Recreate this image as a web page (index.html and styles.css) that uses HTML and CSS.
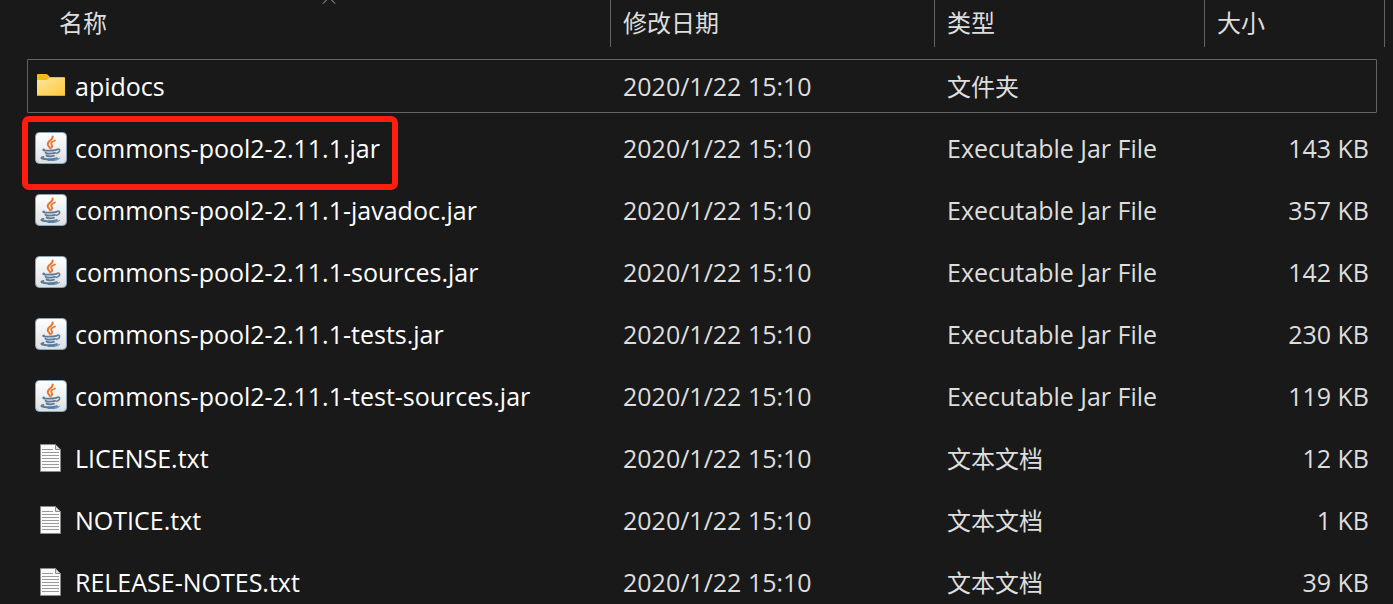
FILE: index.html
```html
<!DOCTYPE html>
<html lang="zh-CN">
<head>
    <meta charset="UTF-8">
    <meta name="viewport" content="width=device-width, initial-scale=1.0">
    <title>commons-pool2-2.11.1</title>
    <link rel="stylesheet" href="styles.css">
</head>
<body>
    <!-- 图标定义 -->
    <svg class="defs" width="0" height="0" aria-hidden="true">
        <defs>
            <linearGradient id="folder-front" x1="0" y1="0" x2="1" y2="1">
                <stop offset="0" stop-color="#ffe59c"/>
                <stop offset="1" stop-color="#fdc839"/>
            </linearGradient>
            <linearGradient id="jar-back" x1="0" y1="0" x2="0" y2="1">
                <stop offset="0" stop-color="#ffffff"/>
                <stop offset="1" stop-color="#dcdfe2"/>
            </linearGradient>
        </defs>
        <symbol id="folder" viewBox="0 0 32 32">
            <path d="M2 5q0-1 1-1h8q1 0 2 1l2 2h14q1 0 1 1v10H2z" fill="#fbb716"/>
            <path d="M2 10h9q1 0 2-1l2-1h14q1 0 1 1v16q0 1-1 1H3q-1 0-1-1z" fill="url(#folder-front)"/>
            <path d="M2 25h28q0 1-1 1H3q-1 0-1-1z" fill="#dba527"/>
        </symbol>
        <symbol id="jar" viewBox="0 0 32 32">
            <rect x="0.5" y="0.5" width="31" height="31" rx="4" fill="url(#jar-back)" stroke="#8ba4b7"/>
            <g fill="none" stroke="#e8762c" stroke-linecap="round">
                <path d="M17.600 4.500c.8 3.600-6 4.500-4.800 8.200.4 1.300 1.700 2.100 2.200 3.500" stroke-width="2"/>
                <path d="M20 8.500c-3 .9-4.800 2.600-3.400 4.300.9 1.100.6 2.200-.4 3.100" stroke-width="1.800"/>
            </g>
            <g fill="none" stroke="#5b7b98" stroke-linecap="round" stroke-width="1.800">
                <path d="M9 17.300c-1.500.5-1 1 .6 1.200 3.800.4 8.300.2 12.200-.6"/>
                <path d="M22.300 17.200c3.400-.8 3.200 3-1 4.200" stroke-width="1.500"/>
                <path d="M10.500 20.700c.7 1.200 6.500 1 9.600.2"/>
                <path d="M11.500 23.500c1 1 5.300 1 7.500.2"/>
                <path d="M8.500 25c-3.500.5-2.500 1.800 1 2 4.500.4 10 .2 12.500-.9"/>
                <path d="M13 28.400c5 .5 9.500 0 11.500-1.900" stroke-width="1"/>
            </g>
        </symbol>
        <symbol id="text-file" viewBox="0 0 32 32">
            <path d="M5.500 2.500h15l5 5v22h-20z" fill="#fbfbfb" stroke="#8b8b8b"/>
            <path d="M20.500 2.500v5h5z" fill="#dedede" stroke="#8b8b8b"/>
            <path d="M7 7.500h11M7 10.500h17M7 13.500h17M7 16.500h17M7 19.500h17M7 22.500h17M7 25.500h17" stroke="#9a9a9a"/>
        </symbol>
    </svg>

    <table class="files">
        <thead>
            <tr>
                <th><button type="button">名称</button><svg class="sort" viewBox="0 0 14 8" aria-hidden="true"><path d="M1 7.500l6-6 6 6"/></svg></th>
                <th><button type="button">修改日期</button></th>
                <th><button type="button">类型</button></th>
                <th><button type="button">大小</button></th>
            </tr>
        </thead>
        <tbody>
            <tr class="focused">
                <td class="name"><svg class="icon"><use href="#folder"/></svg><a href="#">apidocs</a></td>
                <td>2020/1/22 15:10</td>
                <td class="zh">文件夹</td>
                <td class="size"></td>
            </tr>
            <tr>
                <td class="name marked"><svg class="icon"><use href="#jar"/></svg><a href="#">commons-pool2-2.11.1.jar</a></td>
                <td>2020/1/22 15:10</td>
                <td>Executable Jar File</td>
                <td class="size">143 KB</td>
            </tr>
            <tr>
                <td class="name"><svg class="icon"><use href="#jar"/></svg><a href="#">commons-pool2-2.11.1-javadoc.jar</a></td>
                <td>2020/1/22 15:10</td>
                <td>Executable Jar File</td>
                <td class="size">357 KB</td>
            </tr>
            <tr>
                <td class="name"><svg class="icon"><use href="#jar"/></svg><a href="#">commons-pool2-2.11.1-sources.jar</a></td>
                <td>2020/1/22 15:10</td>
                <td>Executable Jar File</td>
                <td class="size">142 KB</td>
            </tr>
            <tr>
                <td class="name"><svg class="icon"><use href="#jar"/></svg><a href="#">commons-pool2-2.11.1-tests.jar</a></td>
                <td>2020/1/22 15:10</td>
                <td>Executable Jar File</td>
                <td class="size">230 KB</td>
            </tr>
            <tr>
                <td class="name"><svg class="icon"><use href="#jar"/></svg><a href="#">commons-pool2-2.11.1-test-sources.jar</a></td>
                <td>2020/1/22 15:10</td>
                <td>Executable Jar File</td>
                <td class="size">119 KB</td>
            </tr>
            <tr>
                <td class="name"><svg class="icon"><use href="#text-file"/></svg><a href="#">LICENSE.txt</a></td>
                <td>2020/1/22 15:10</td>
                <td class="zh">文本文档</td>
                <td class="size">12 KB</td>
            </tr>
            <tr>
                <td class="name"><svg class="icon"><use href="#text-file"/></svg><a href="#">NOTICE.txt</a></td>
                <td>2020/1/22 15:10</td>
                <td class="zh">文本文档</td>
                <td class="size">1 KB</td>
            </tr>
            <tr>
                <td class="name"><svg class="icon"><use href="#text-file"/></svg><a href="#">RELEASE-NOTES.txt</a></td>
                <td>2020/1/22 15:10</td>
                <td class="zh">文本文档</td>
                <td class="size">39 KB</td>
            </tr>
        </tbody>
    </table>
</body>
</html>
```
FILE: styles.css
```css
*,
*::after{
    box-sizing: border-box;
}
body{
    margin: 0;
    overflow: hidden;
    background-color: #191919;
    color: #dedede;
    font-family: "Open Sans", "Noto Sans CJK SC", sans-serif;
    font-size: 25px;
    line-height: 32px;
}
.defs{
    position: absolute;
}

.files{
    display: block;
    padding: 0 8px 0 27px;
}
.files thead,
.files tbody{
    display: block;
}
/* 表头和每一行用同样的列宽 */
.files tr{
    display: grid;
    grid-template-columns: minmax(0, 1fr) 324px 270px 180px;
}

/* 表头 */
.files thead tr{
    height: 47px;
    margin-left: 20px;
}
.files th{
    position: relative;
    padding: 0 12px;
    border-right: 1px solid #636363;
    text-align: left;
    font-weight: normal;
}
.files th button{
    display: block;
    width: 100%;
    height: 42px;
    padding: 0;
    border: 0;
    background: none;
    color: #dedede;
    font-family: "Noto Sans CJK SC", sans-serif;
    font-size: 24px;
    text-align: left;
}
/* 排序箭头 */
.sort{
    position: absolute;
    top: -4px;
    left: 50%;
    width: 14px;
    height: 8px;
    margin-left: -7px;
    fill: none;
    stroke: #b0b0b0;
}

/* 文件列表 */
.files tbody{
    padding-top: 12px;
}
.files tbody tr{
    grid-template-columns: minmax(0, 1fr) 324px 270px 172px;
    height: 54px;
    margin: 0 8px 8px 0;
    border: 1px solid transparent;
}
.files tbody .focused{
    border-color: #636363;
    border-radius: 1px;
}
.files td{
    display: flex;
    align-items: center;
    padding: 0 13px;
    white-space: nowrap;
}
.files .name{
    position: relative;
    gap: 8px;
    padding: 0 7px;
}
.files .name a{
    color: #fff;
    text-decoration: none;
}
.files .size{
    justify-content: flex-end;
    padding: 0 7px;
}
.files .zh{
    font-family: "Noto Sans CJK SC", sans-serif;
    font-size: 24px;
}
.icon{
    flex: none;
    width: 32px;
    height: 32px;
}

/* 红框标记 */
.marked::after{
    content: '';
    position: absolute;
    top: -6px;
    left: -6px;
    width: 376px;
    height: 74px;
    border: 6px solid #ff1d10;
    border-radius: 7px;
    pointer-events: none;
}
```
